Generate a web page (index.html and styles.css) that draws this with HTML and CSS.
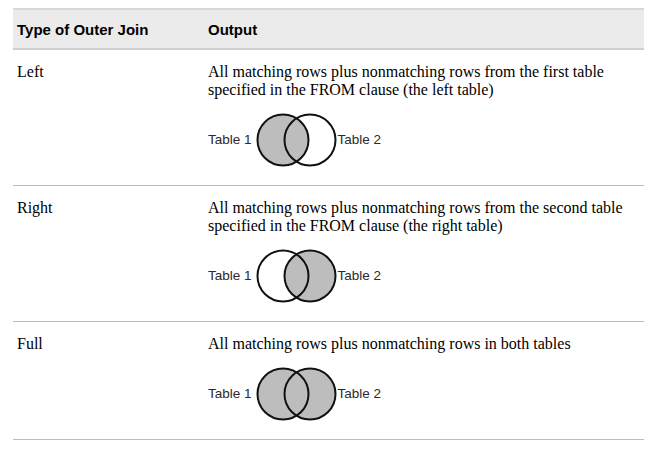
FILE: index.html
```html
<!DOCTYPE html>
<html>
<head>
<meta charset="utf-8">
<link rel="stylesheet" href="styles.css">
</head>
<body>
<div class="jtable">
  <div class="row head">
    <div class="c1">Type of Outer Join</div>
    <div class="c2">Output</div>
  </div>
  <div class="row body">
    <div class="c1">Left</div>
    <div class="c2">
      <p class="desc">All matching rows plus nonmatching rows from the first table specified in the FROM clause (the left table)</p>
      <div class="venn">
        <span class="lbl">Table 1</span>
        <svg width="82" height="56" viewBox="0 0 82 56">
          <circle cx="27" cy="28" r="25.5" fill="#bdbdbd"/>
          <circle cx="27" cy="28" r="25.5" fill="none" stroke="#111" stroke-width="2"/>
          <circle cx="54" cy="28" r="25.5" fill="none" stroke="#111" stroke-width="2"/>
        </svg>
        <span class="lbl">Table 2</span>
      </div>
    </div>
  </div>
  <div class="row body">
    <div class="c1">Right</div>
    <div class="c2">
      <p class="desc">All matching rows plus nonmatching rows from the second table specified in the FROM clause (the right table)</p>
      <div class="venn">
        <span class="lbl">Table 1</span>
        <svg width="82" height="56" viewBox="0 0 82 56">
          <circle cx="54" cy="28" r="25.5" fill="#bdbdbd"/>
          <circle cx="27" cy="28" r="25.5" fill="none" stroke="#111" stroke-width="2"/>
          <circle cx="54" cy="28" r="25.5" fill="none" stroke="#111" stroke-width="2"/>
        </svg>
        <span class="lbl">Table 2</span>
      </div>
    </div>
  </div>
  <div class="row body">
    <div class="c1">Full</div>
    <div class="c2">
      <p class="desc">All matching rows plus nonmatching rows in both tables</p>
      <div class="venn">
        <span class="lbl">Table 1</span>
        <svg width="82" height="56" viewBox="0 0 82 56">
          <circle cx="27" cy="28" r="25.5" fill="#bdbdbd"/>
          <circle cx="54" cy="28" r="25.5" fill="#bdbdbd"/>
          <circle cx="27" cy="28" r="25.5" fill="none" stroke="#111" stroke-width="2"/>
          <circle cx="54" cy="28" r="25.5" fill="none" stroke="#111" stroke-width="2"/>
        </svg>
        <span class="lbl">Table 2</span>
      </div>
    </div>
  </div>
</div>
</body>
</html>
```
FILE: styles.css
```css
html, body {
  margin: 0;
  padding: 0;
  background: #fff;
}
.jtable {
  margin: 8px 0 0 13px;
  width: 631px;
}
.row {
  display: grid;
  grid-template-columns: 191px 1fr;
}
.c1, .c2 {
  padding-left: 4px;
}
.head {
  background: #ebebeb;
  border-top: 2px solid #d9d9d9;
  border-bottom: 2px solid #cfcfcf;
  height: 38px;
  align-items: center;
  font-family: "Liberation Sans", Arial, sans-serif;
  font-weight: bold;
  font-size: 15px;
  color: #000;
}
.body {
  border-bottom: 1px solid #bdbdbd;
  padding: 13px 0 17px;
  font-family: "Liberation Serif", "Times New Roman", serif;
  font-size: 16px;
  line-height: 18px;
  color: #000;
}
.desc {
  margin: 0;
  width: 425px;
}
.venn {
  display: flex;
  align-items: center;
  margin-top: 13px;
  height: 56px;
}
.venn svg {
  display: block;
  margin-left: 4px;
}
.lbl {
  font-family: "Liberation Sans", Arial, sans-serif;
  font-size: 13.5px;
  color: #2a2a2a;
}
```
